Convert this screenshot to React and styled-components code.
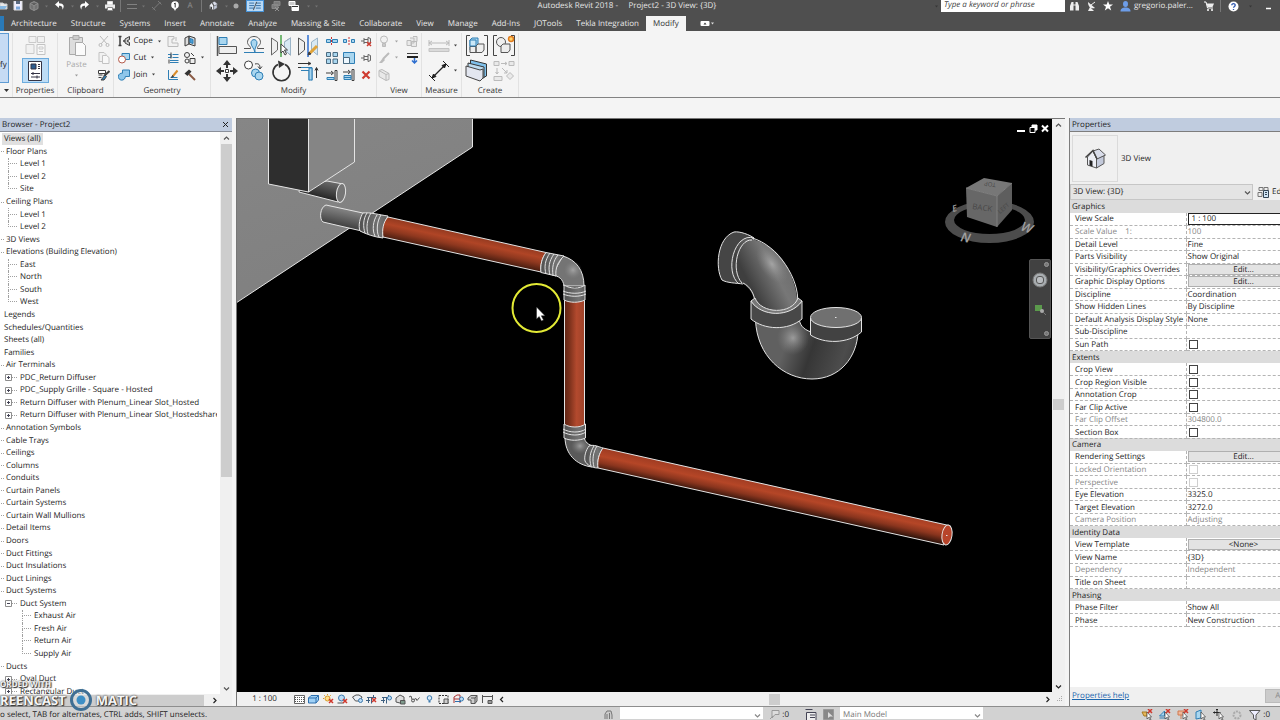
import React from "react";
import styled, { createGlobalStyle, css } from "styled-components";

const GlobalStyle = createGlobalStyle`
  * { box-sizing: border-box; }
  html, body, #root { height: 100%; }
  body {
    margin: 0;
    overflow: hidden;
    background: #f4f4f4;
    color: #1c1c1c;
    font-family: "Open Sans", "Noto Sans", sans-serif;
    font-size: 8px;
    line-height: 12px;
    text-rendering: geometricPrecision;
  }
  button, input, select { font: inherit; color: inherit; margin: 0; padding: 0; text-rendering: inherit; }
  button { border: 0; background: none; }
  svg { display: block; flex: none; }
`;

const Page = styled.div`
  position: relative;
  display: flex;
  flex-direction: column;
  height: 100vh;
  overflow: hidden;
  white-space: nowrap;
`;

/* ---------- title bar ---------- */

const TitleBar = styled.header`
  display: flex;
  flex: none;
  height: 16px;
  background: #4f4f4f;
  color: #e6e6e6;
  line-height: 12px;
`;

const QuickAccess = styled.div`
  display: flex;
  flex: 0 0 42%;
  height: 12px;
  overflow: hidden;
`;

const Slot = styled.button`
  display: flex;
  align-items: center;
  justify-content: center;
  flex: none;
  width: ${(p) => p.$w}px;
  height: 12px;
  overflow: hidden;
  opacity: ${(p) => (p.$dim ? 0.4 : 1)};
`;

const ActiveSlot = styled(Slot)`
  padding: 0 5px;
  svg { background: #b9d9f5; border: 1px solid #4793d8; }
`;

const Divider = styled.span`
  flex: none;
  width: 1px;
  height: 12px;
  margin: 0 3px;
  background: #777;
`;

const AppTitle = styled.h1`
  margin: 0;
  font-size: 8px;
  font-weight: 400;
  line-height: 12px;
  white-space: pre;
`;

const AccountBar = styled.div`
  display: flex;
  height: 12px;
  margin-left: auto;
`;

const Search = styled.input`
  width: 124px;
  height: 12px;
  margin-right: 1px;
  padding: 0 3px 2px;
  border: 0;
  background: #fff;
  color: #333;
  font-style: italic;
  &::placeholder { color: #444; opacity: 1; }
`;

const UserName = styled.button`
  width: 68px;
  text-align: left;
`;

/* ---------- ribbon ---------- */

const Tabs = styled.nav`
  display: flex;
  align-items: flex-start;
  flex: none;
  height: 15px;
  background: #4f4f4f;
`;

const FileTab = styled.button`
  width: 4px;
  height: 15px;
  background: #2a7ab8;
`;

const Tab = styled.button`
  height: 15px;
  padding: 0 7px;
  color: ${(p) => (p.$active ? "#333" : "#e8e8e8")};
  background: ${(p) => (p.$active ? "#f4f4f4" : "none")};
`;

const TabMenu = styled.button`
  display: flex;
  align-items: center;
  height: 15px;
  margin-left: 14px;
`;

const Ribbon = styled.section`
  display: flex;
  flex: none;
  height: 67px;
  padding-top: 2px;
  border-bottom: 1px solid #828282;
  background: #f4f4f4;
`;

const Panel = styled.div`
  display: flex;
  flex-direction: column;
  flex: none;
  width: ${(p) => p.$w}px;
  border-right: 1px solid #e2e2e2;
`;

const PanelBody = styled.div`
  display: flex;
  justify-content: center;
  gap: ${(p) => p.$gap || 0}px;
  height: 50px;
`;

const PanelLabel = styled.div`
  height: 14px;
  color: #333;
  line-height: 16px;
  text-align: center;
`;

const BigGrid = styled.div`
  display: grid;
  grid-auto-flow: column;
  grid-template-rows: 25px 25px;
  grid-auto-columns: 27px;
`;

const CaretColumn = styled.div`
  display: grid;
  grid-template-rows: 25px 25px;
  align-items: center;
`;

const SmallGrid = styled.div`
  display: grid;
  grid-auto-flow: column;
  grid-template-rows: repeat(3, 1fr);
  grid-auto-columns: ${(p) => p.$col || 17}px;
  height: 50px;
`;

const Tool = styled.button`
  display: flex;
  align-items: center;
  justify-content: ${(p) => (p.$start ? "flex-start" : "center")};
  gap: 4px;
  opacity: ${(p) => (p.$dim ? 0.45 : 1)};
`;

const PressedTool = styled(Tool)`
  border: 1px solid #6cabdd;
  background: #bcdcf6;
`;

const SelectTool = styled.button`
  width: 9px;
  height: 50px;
  padding-top: 14px;
  border: 1px solid #5e9bd3;
  border-left: 0;
  background: #c6dbf4;
  text-align: left;
  margin-right: auto;
`;

const PasteTool = styled.button`
  display: flex;
  flex-direction: column;
  align-items: center;
  gap: 3px;
  padding-top: 2px;
  width: 36px;
  color: #a8a8a8;
`;

const OptionsBar = styled.div`
  flex: none;
  height: 20px;
  background: #f4f4f4;
`;

/* ---------- work area ---------- */

const Workspace = styled.main`
  display: flex;
  flex: 1;
  gap: 4px;
  min-height: 0;
`;

const DockTitle = styled.h2`
  display: flex;
  justify-content: space-between;
  flex: none;
  height: 13px;
  margin: 0;
  padding: 0 3px 0 2px;
  background: #c0ccdf;
  font-size: 8px;
  font-weight: 400;
  line-height: 14px;
  button { display: flex; align-items: center; height: 12px; }
`;

const Browser = styled.aside`
  display: flex;
  flex-direction: column;
  flex: 0 0 232px;
  min-width: 0;
  min-height: 0;
`;

const TreeArea = styled.div`
  display: flex;
  flex: 1;
  min-height: 0;
  border-top: 1px solid #8a8f9a;
  background: #fff;
`;

const TreeClip = styled.div`
  flex: 1;
  min-width: 0;
  margin-right: 3px;
  padding-top: 1px;
  overflow: hidden;
`;

const Tree = styled.ul`
  display: grid;
  grid-auto-rows: 1fr;
  height: calc(100% + 4px);
  margin: 0;
  padding: 0;
  list-style: none;
`;

const TreeRow = styled.li`
  display: flex;
  align-items: center;
  min-height: 0;
  padding-left: ${(p) => p.$indent}px;
`;

const Root = styled.span`
  padding: 0 2px;
  ${(p) => p.$selected && css`background: #e0e0e0;`}
`;

const Dash = styled.i`
  width: ${(p) => p.$w}px;
  margin-right: ${(p) => p.$gap}px;
  border-top: 1px dotted #a0a0a0;
`;

const Branch = styled.i`
  display: grid;
  grid-template-rows: 1fr 1fr;
  align-self: stretch;
  width: 9px;
  margin-right: 3px;
  &::before {
    content: "";
    border-left: 1px dotted #a0a0a0;
    border-bottom: 1px dotted #a0a0a0;
  }
  &::after {
    content: "";
    border-left: ${(p) => (p.$last ? 0 : 1)}px dotted #a0a0a0;
  }
`;

const Expander = styled.button`
  display: flex;
  width: 7px;
  height: 7px;
`;

const VScroll = styled.div`
  display: flex;
  flex-direction: column;
  align-items: center;
  justify-content: space-between;
  flex: none;
  width: ${(p) => p.$w}px;
  background: #f0f0f0;
`;

const ScrollButton = styled.button`
  display: flex;
  align-items: center;
  justify-content: center;
  flex: none;
  width: 12px;
  height: 12px;
`;

const Track = styled.div`
  display: flex;
  flex-direction: ${(p) => (p.$horizontal ? "row" : "column")};
  align-items: center;
  flex: 1;
  align-self: stretch;
`;

const Space = styled.span`
  flex: ${(p) => p.$grow};
`;

const Thumb = styled.span`
  flex: ${(p) => p.$grow || "0 0 11px"};
  ${(p) => (p.$horizontal ? "height: 11px;" : "width: 11px;")}
  background: #cdcdcd;
`;

const HScroll = styled.div`
  display: flex;
  flex: none;
  align-items: center;
  height: 12px;
  background: #f0f0f0;
`;

/* ---------- 3D view ---------- */

const ViewWindow = styled.section`
  display: flex;
  flex-direction: column;
  flex: 1;
  min-width: 0;
  border-left: 1px solid #777;
`;

const ViewRow = styled.div`
  display: flex;
  flex: 1;
  min-height: 0;
  border-top: 1px solid #777;
`;

const Canvas = styled.div`
  position: relative;
  flex: 1;
  min-width: 0;
  overflow: hidden;
  background: #000;
  > svg { width: 100%; height: 100%; }
`;

const WindowButtons = styled.div`
  position: absolute;
  top: 4px;
  right: 2px;
  display: flex;
  gap: 3px;
  button { width: 9px; height: 10px; display: flex; align-items: center; }
`;

const NavBar = styled.div`
  position: absolute;
  top: 140px;
  right: 1px;
  display: flex;
  flex-direction: column;
  align-items: center;
  width: 22px;
  height: 80px;
  padding: 2px 0;
  border: 1px solid #555;
  border-radius: 2px;
  background: #414141;
  button { display: flex; }
  button:nth-child(1), button:nth-child(4) { align-self: flex-end; margin-right: 1px; }
  button:nth-child(2) { margin: 5px 0 15px; }
  button:nth-child(4) { margin-top: auto; }
`;

const ControlBar = styled.div`
  display: flex;
  align-items: center;
  flex: none;
  height: 14px;
  background: #f0f0f0;
`;

const ScaleButton = styled.button`
  width: 55px;
  text-align: center;
`;

const ControlIcons = styled.div`
  display: grid;
  grid-template-columns: repeat(15, 1fr);
  width: 217px;
  button { display: flex; align-items: center; justify-content: center; }
`;

/* ---------- properties ---------- */

const Properties = styled.aside`
  display: flex;
  flex: 0 0 211px;
  overflow: hidden;
  border-left: 1px solid #7d7d7d;
`;

const PropertiesInner = styled.div`
  display: flex;
  flex-direction: column;
  flex: 0 0 230px;
  background: #f0f0f0;
`;

const TypeCard = styled.div`
  display: flex;
  align-items: center;
  gap: 3px;
  height: 52px;
  padding: 2px 2px 0;
  border-top: 1px solid #7d7d7d;
`;

const TypeThumb = styled.div`
  display: flex;
  align-items: center;
  justify-content: center;
  width: 46px;
  height: 47px;
  border: 1px solid #dadada;
`;

const TypeRow = styled.div`
  display: flex;
  align-items: center;
  height: 17px;
  gap: 4px;
`;

const SelectBox = styled.span`
  position: relative;
  display: block;
  flex: 0 0 ${(p) => p.$w}px;
  select {
    width: 100%;
    height: ${(p) => p.$h}px;
    padding: 0 2px;
    appearance: none;
    border: 1px solid ${(p) => (p.$light ? "#fff" : "#c6c6c6")};
    border-radius: 0;
    background: ${(p) => (p.$light ? "#fff" : "#e4e4e4")};
    color: ${(p) => (p.$light ? "#777" : "#1c1c1c")};
  }
  svg { position: absolute; right: 2px; top: 50%; margin-top: -3px; pointer-events: none; }
`;

const EditType = styled.button`
  display: flex;
  align-items: center;
  gap: 3px;
`;

const Grid = styled.table`
  width: 100%;
  height: 427px;
  border-collapse: collapse;
  table-layout: fixed;
  background: #fff;
  line-height: 11px;
  th, td { padding: 0; text-align: left; font-weight: 400; height: 12px; }
`;

const NameColumn = styled.col`
  width: 116px;
`;

const GroupRow = styled.tr`
  background: #dcdcdc;
  th { padding-left: 2px; }
`;

const PropRow = styled.tr`
  color: ${(p) => (p.$dim ? "#868686" : "#1c1c1c")};
  th {
    padding-left: 5px;
    border-right: 1px dashed #b4b4b4;
    border-bottom: 1px dashed #b4b4b4;
    white-space: pre;
  }
  td {
    padding-left: 1px;
    border-bottom: 1px dashed #b4b4b4;
  }
`;

const CellInput = styled.input`
  display: block;
  width: 100%;
  height: 12px;
  padding: 0 3px;
  border: 1px solid #222;
  background: #fff;
`;

const CellButton = styled.button`
  display: block;
  width: 112px;
  height: 11px;
  border: 1px solid #b0b0b0;
  background: #e3e3e3;
  line-height: 9px;
`;

const Check = styled.input`
  display: block;
  appearance: none;
  width: 9px;
  height: 9px;
  margin-left: 1px;
  border: 1px solid ${(p) => (p.disabled ? "#cfcfcf" : "#444")};
  background: #fff;
`;

const GridRest = styled.div`
  flex: 1;
  background: #fff;
`;

const HelpRow = styled.div`
  display: flex;
  align-items: center;
  justify-content: space-between;
  height: 19px;
  padding: 0 0 1px 2px;
  a { color: #1c66ae; }
`;

const ApplyButton = styled.button`
  width: 41px;
  height: 14px;
  border: 1px solid #bbb;
  background: #cbcbcb;
  color: #8a8a8a;
`;

/* ---------- status bar ---------- */

const StatusBar = styled.footer`
  display: flex;
  flex: none;
  align-items: center;
  height: 14px;
  padding-top: 2px;
  border-top: 1px solid #8e8e8e;
  background: #d2d2d2;
  line-height: 14px;
  overflow: hidden;
`;

const StatusText = styled.span`
  flex: 1;
  min-width: 0;
`;

const StatusGroup = styled.div`
  display: flex;
  align-items: center;
  flex: none;
  gap: 6px;
`;

const StatusRight = styled(StatusGroup)`
  flex: 0 0 297px;
  justify-content: flex-end;
  padding-right: 10px;
`;

const Count = styled.span`
  margin-left: -4px;
  margin-right: ${(p) => p.$after || 0}px;
`;

const Watermark = styled.div`
  position: absolute;
  left: 0;
  bottom: 8px;
  color: #f6f6f6;
  font-weight: 700;
  text-shadow: 0 0 2px #222, 1px 1px 1px #333;
  pointer-events: none;
`;

const MarkTop = styled.div`
  height: 10px;
  line-height: 12px;
`;

const MarkLine = styled.div`
  display: flex;
  align-items: center;
  gap: 3px;
  height: 24px;
  margin-top: -1px;
  font-size: 13px;
`;

/* ---------- icons ---------- */

const K = "#3f3f3f";
const B = "#2f7fb5";
const L = "#a9d6ef";

const Svg = ({ s = 12, w, h, children }) => (
  <svg width={w || s} height={h || s} viewBox={`0 0 ${w || s} ${h || s}`} fill="none" stroke={K} strokeWidth="1" aria-hidden="true">
    {children}
  </svg>
);

const Caret = ({ c = K }) => (
  <Svg w={5} h={3}><path d="M1 0.5h3L2.5 2.5z" fill={c} stroke="none" /></Svg>
);

const Chevron = ({ d = "down", c = "#555", s = 7 }) => {
  const paths = { down: "M1 2.5l2.5 2.5L6 2.5", up: "M1 4.5L3.5 2 6 4.5", right: "M2.5 1L5 3.5 2.5 6", left: "M5 1L2.5 3.5 5 6" };
  return <Svg s={s}><path d={paths[d]} stroke={c} strokeWidth="1.2" /></Svg>;
};

const Save = () => <Svg s={10}><path d="M1 0h8v9H1z" fill="#eef" stroke="#ddd" /><path d="M3 0h4v3H3z" fill="#5a6a80" stroke="none" /><path d="M3 5.5h4v3H3z" fill="#7aa5d8" stroke="none" /></Svg>;
const Folder = () => <Svg w={8} h={10}><path d="M0 2h3l1 1h3v5H0z" fill="#e8e8e8" stroke="#ccc" /><path d="M0 5h7l-2 3H0z" fill="#86b7e0" stroke="none" /></Svg>;
const CubeGrey = () => <Svg s={10}><path d="M5 0.500L9 2.500v5L5 9.500 1 7.500v-5zM5 4.500v5M1 2.500l4 2 4-2" stroke="#eee" fill="#aaa" /></Svg>;
const Undo = () => <Svg s={10}><path d="M4 0L0 3.500 4 7V4.800c3 0 3.500 1 3.500 4C9.800 5.500 9 2.300 4 2.300z" fill="#fff" stroke="none" /></Svg>;
const Redo = () => <Svg s={10}><path d="M6 0l4 3.500L6 7V4.800c-3 0-3.500 1-3.500 4C0.200 5.500 1 2.300 6 2.300z" fill="#fff" stroke="none" /></Svg>;
const Print = () => <Svg s={10}><path d="M2.500 0.500h5v3h-5z" fill="#fff" stroke="#ddd" /><path d="M0 3.500h10v4H0z" fill="#e9e9e9" stroke="none" /><path d="M2.500 6.500h5v3h-5z" fill="#fff" stroke="#888" /></Svg>;
const Ruler = () => <Svg s={10}><path d="M0 3.500h10M0 7.500h10" stroke="#ccc" /></Svg>;
const AlignedDim = () => <Svg s={10}><path d="M1 8.500L8.500 1M6 0l3.500 3.500M0 6l3.500 3.500" stroke="#bbb" /></Svg>;
const TagOne = () => <Svg s={10}><circle cx="5" cy="4" r="3.800" fill="#fff" stroke="none" /><path d="M3.500 7h3L5 10z" fill="#fff" stroke="none" /><path d="M4 3l1.200-1v4.500" stroke="#333" /></Svg>;
const House3D = ({ s = 10 }) => (
  <svg width={s} height={s} viewBox="0 0 22 22" fill="none" stroke="#47536a" strokeWidth="1" aria-hidden="true">
    <path d="M3.500 9L9 3l3.500 7.500V20L3.500 17z" fill="#eceef4" stroke="#555" />
    <path d="M12.500 10.500l7.500-3v8L12.500 20z" fill="#c3c9da" stroke="#555" />
    <path d="M9 3l6-2 6.500 6-8.500 4z" fill="#d9ddea" stroke="#555" />
    <path d="M1.500 9.500L9 2.500l4 8.500" stroke="#444" strokeWidth="1.500" />
    <path d="M5.500 12l3 1v5.500l-3-1z" fill="#222" stroke="none" />
  </svg>
);
const Section = () => <Svg s={8}><circle cx="4" cy="4" r="2.500" fill="#aaa" stroke="none" /></Svg>;
const ThinLines = () => <Svg w={18} h={12}><path d="M2 2.500h6M2 5.500h6M2 8.500h6M10 2.500h6M10 5.500h6M10 8.500h6" stroke="#1f5f98" /><path d="M11 1L7 11" stroke={K} /></Svg>;
const CloseHidden = () => <Svg s={10}><path d="M3 0.500h6v4H3zM1 3.500h6v4H1z" fill="#bbb" stroke="#ddd" /><path d="M4 6l4 4M8 6l-4 4" stroke="#fff" /></Svg>;
const SwitchWin = () => <Svg s={11}><path d="M1 0.500h6v4H1z" fill="#ccc" stroke="#fff" /><path d="M4 4.500h6.500v5H4z" fill="#fff" stroke="#fff" /><path d="M4 5.500h6" stroke="#333" /></Svg>;
const Binoculars = () => <Svg s={11}><path d="M1 9.500V5l1.500-4h2v8.500zM6.500 9.500V1h2L10 5v4.500z" fill="#eee" stroke="none" /><path d="M4 4h3" stroke="#eee" /></Svg>;
const Dish = () => <Svg s={11}><path d="M2 1c0 5 3 7 7 6zM4 6l-2 4h6z" fill="#eee" stroke="none" /><path d="M5 4l4-3" stroke="#eee" /></Svg>;
const Star = () => <Svg s={10}><path d="M5 0l1.300 3.600H10L7 5.800 8.200 9.500 5 7.300 1.800 9.500 3 5.800 0 3.600h3.700z" fill="#fff" stroke="none" /></Svg>;
const Person = () => <Svg s={11}><ellipse cx="5.500" cy="3" rx="2.500" ry="3" fill="#6d9de8" stroke="none" /><path d="M0.500 10.500c0-3 2-4 5-4s5 1 5 4z" fill="#6d9de8" stroke="none" /></Svg>;
const Cart = () => <Svg s={11}><path d="M0 1h2l1.500 6H9" stroke="#fff" /><path d="M2.500 2.500H10L8.500 6h-5z" fill="#eee" stroke="none" /><circle cx="4" cy="9" r="1" fill="#fff" stroke="none" /><circle cx="8" cy="9" r="1" fill="#fff" stroke="none" /></Svg>;
const Help = () => <Svg s={11}><circle cx="5.500" cy="5.500" r="5" fill="#fff" stroke="none" /><path d="M3.800 4.200c0-2 3.400-2 3.400 0 0 1.300-1.700 1.300-1.700 2.600M5.500 8v1" stroke="#2f58b0" strokeWidth="1.300" /></Svg>;

const TypeProps = () => <Svg s={22}><path d="M5 1.500h7v6H5zM13.500 1.500h7v6h-7zM2 9.500h8v9H2z" stroke="#999" fill="#eee" /><path d="M13 9.500h8v10h-8z" stroke="#888" fill="#fff" /><path d="M15 12h4v2h-4zM15 16.500h4" stroke="#999" /></Svg>;
const PropsSheet = () => <Svg w={16} h={20}><path d="M1.500 0.500h13v19h-13z" fill="#fff" stroke="#334" /><path d="M4 3h5v5H4z" fill="#2c5d8f" stroke="#334" /><path d="M11 3.500h2M11 5.500h2M11 7.500h2M4 12.500h9M4 16h9M6 11v3M10 14.500v3" stroke="#334" /></Svg>;
const Paste = () => <Svg w={18} h={21}><path d="M1.500 2.500h13v17h-13z" fill="#ddd" stroke="#aaa" /><path d="M5 0.500h6v4H5z" fill="#ccc" stroke="#aaa" /><path d="M7.500 7.500h7l3 3v10h-10z" fill="#fbfbfb" stroke="#aaa" /></Svg>;
const Scissors = () => <Svg s={12}><path d="M2 1l7 8M10 1L3 9" stroke="#777" /><circle cx="2.500" cy="10" r="1.500" stroke="#777" /><circle cx="9.500" cy="10" r="1.500" stroke="#777" /></Svg>;
const Copy2 = () => <Svg s={12}><path d="M1 0.500h5l2 2v7H1z" fill="#eee" stroke="#888" /><path d="M4.500 3.500h4l2.500 2v6H4.500z" fill="#fff" stroke="#888" /></Svg>;
const MatchType = () => <Svg s={12}><path d="M0.500 1.500h7v3h-7zM0.500 6h4M0.500 8.500h3" fill="#fff" /><path d="M11.500 2L6 7" strokeWidth="2" /><path d="M7 6l1.500 1.500L6 11H3z" fill={B} stroke={K} /></Svg>;

const Cope = () => <Svg s={12}><path d="M0.500 1.500h3M0.500 10.500h3M2 1.500v9M5 6h2.500" strokeWidth="1.500" /><path d="M11.500 1.500L7 4v4l4.500 2.500V7.500L9 6l2.500-1.500z" fill="#ccc" /></Svg>;
const CutGeo = () => <Svg s={12}><path d="M4 1.500h7.500v6H4z" fill={L} stroke={B} /><circle cx="4" cy="7.500" r="3.500" fill="#fff" stroke="#b45a4a" /></Svg>;
const JoinGeo = () => <Svg s={12}><path d="M4.500 1h7v6.500H7.300A3.500 3.500 0 1 1 4.500 4.200z" fill="#8ec6ea" stroke={B} /></Svg>;
const Notch = () => <Svg s={12}><path d="M1 1.500h6V4H5v4h6v3.500H1z" fill="#eee" stroke="#777" /><path d="M9 2v4" stroke="#777" /></Svg>;
const SplitFace = () => <Svg s={12}><path d="M1 3l4-2v8l-4 2zM5 1l6 2v8L5 9z" fill="#ddd" stroke={K} /><path d="M6 3.500l3 1v4l-3-1z" fill="#4a9fd8" stroke={B} /></Svg>;
const WallJoin = () => <Svg s={12}><path d="M1 2.500h3v3H1M5.500 2.500h6M5.500 5.500h6M3 8.500h8.500M3 10.500h8.500" stroke={B} /><path d="M4 0.500v6M2 7.500v4" stroke={K} /></Svg>;
const Unjoin = () => <Svg s={12}><circle cx="3" cy="3" r="2.500" /><path d="M6 6.500h5v5H6z" fill="#eee" /><circle cx="3" cy="9" r="2" /><path d="M7 1l3 3" /></Svg>;
const PaintEdit = () => <Svg s={12}><path d="M1.500 1v9.500H11M3.500 8.500h7" stroke={B} /><path d="M10.500 1.500L6 7" stroke="#d98c2b" strokeWidth="2" /><path d="M4.500 8.500l1-2 1 1z" fill={K} /></Svg>;
const Hammer = () => <Svg s={12}><path d="M5 5l6 6" stroke="#8a5a44" strokeWidth="2" /><path d="M0.500 4.500L5 0.500l2.500 2L3.500 7z" fill="#333" stroke="none" /></Svg>;

const Align = () => <Svg s={22}><path d="M1.500 1v20" stroke="#555" strokeWidth="1.500" /><path d="M3 2.500h8v7H3z" fill={L} stroke={B} /><path d="M3 11.500h17.500v7H3z" fill="#eee" stroke="#555" /></Svg>;
const Offset = () => <Svg s={22}><path d="M1 13.500h6.500C8.500 12 4.500 10 4.500 7.500c0-8 13-8 13 0 0 2.500-4 4.500-3 6H21" stroke="#555" /><path d="M1 17.500h11C11 13 8 11 8 8c0-4.500 6-4.500 6 0 0 3-3 5-2 9.500h9" fill={L} stroke={B} /></Svg>;
const MirrorPick = () => <Svg s={22}><path d="M1.500 3l6 4v8l-6 5zM20.500 3l-6 4v8l6 5z" fill="#eee" stroke="#666" /><path d="M20.500 3l-6 4v8l6 5z" fill="#d8e9f4" stroke="#9ab4c8" /><path d="M11 0v22" stroke="#4ca64c" strokeWidth="1.500" /><path d="M11 9v9l2-2 2 4 1.500-1-2-4h3z" fill="#fff" stroke={K} /></Svg>;
const MirrorDraw = () => <Svg s={22}><path d="M1.500 3l6 4v8l-6 5z" fill="#eee" stroke="#555" /><path d="M20.500 3l-6 4v8l6 5z" fill="#d8e9f4" stroke="#9ab4c8" /><path d="M11 0v22" stroke="#2f6fd0" strokeWidth="1.500" /><path d="M20 11l-7 7" stroke="#e0a33a" strokeWidth="3" /><path d="M11 20l1-3 2 2z" fill={K} /></Svg>;
const Move = () => <Svg s={22}><path d="M11 0l4 5h-3v3h-2V5H7zM11 22l4-5h-3v-3h-2v3H7zM0 11l5-4v3h3v2H5v3zM22 11l-5-4v3h-3v2h3v3z" fill="#333" stroke="none" /><path d="M9.500 9.500h3v3h-3z" fill="#fff" /></Svg>;
const CopyTool = () => <Svg s={22}><circle cx="5.500" cy="5" r="4" fill="#fff" stroke={K} /><circle cx="12.500" cy="13" r="4" fill={L} stroke={B} /><circle cx="16" cy="16" r="4" fill={L} stroke={B} /><path d="M12 4c4-1 5 1 5 4M15 6.500l2 2.500 2-2.500" stroke={K} /></Svg>;
const Rotate = () => <Svg s={22}><path d="M15 4.500a8.500 8.500 0 1 1-7 0" strokeWidth="1.600" stroke="#333" /><path d="M8 0.500l7 3.500-6 4z" fill="#333" stroke="none" /></Svg>;
const Trim = () => <Svg s={22}><path d="M1 7.500h10M1 3.500h12M11 2l3 1.500L11 5" stroke="#333" /><path d="M4 7.500h11v13M4 10.500h8v10" stroke={B} fill="none" /><path d="M12 8h3v12h-3z" fill={L} stroke={B} /><path d="M19.500 18V8M18 10.500l1.500-3 1.500 3" stroke="#333" /></Svg>;
const Split = () => <Svg s={12}><path d="M0.500 4.500h4v3h-4zM6.500 4.500h5v3h-5z" fill={L} stroke={B} /><path d="M5.500 2v8" stroke="#c33" strokeDasharray="2 1" /></Svg>;
const SplitGap = () => <Svg s={12}><path d="M0.500 4.500h3v3h-3zM8.500 4.500h3v3h-3z" fill={L} stroke={B} /><path d="M6 2v8" stroke="#c33" strokeDasharray="2 1" /></Svg>;
const Pin = ({ x }) => <Svg s={12}><path d="M1 6h3M4 3v6M4 4.500h4M4 7.500h4M8 2.500v7l2.500-1V3.500z" stroke="#666" fill="#eee" />{x && <path d="M7 7l4 4M11 7l-4 4" stroke="#d03a30" strokeWidth="1.500" />}</Svg>;
const ArrayTool = () => <Svg s={12}><path d="M0.500 0.500h4v4h-4zM7 0.500h4.500v4H7zM0.500 7h4v4.500h-4zM7 7h4.500v4.500H7z" fill={L} stroke="#4a6a80" /></Svg>;
const Scale = () => <Svg s={12}><path d="M0.500 0.500h11v11h-11z" fill={L} stroke={B} /><path d="M0.500 5.500h6v6h-6z" fill="#eef8ff" stroke="#4a6a80" /></Svg>;
const TrimOne = () => <Svg s={12}><path d="M0 4h7M5 2l2.500 2L5 6M9 1.500h2v10H9z" /><path d="M1 8.500h7v2H1z" fill={L} stroke={B} /></Svg>;
const TrimMany = () => <Svg s={12}><path d="M0 3h7M5 1l2.500 2L5 5M9 0.500h2v11H9z" /><path d="M1 6.500h7v4H1zM1 8.500h7" fill={L} stroke={B} /></Svg>;
const Delete = () => <Svg s={10}><path d="M1.500 1.500l7 7M8.500 1.500l-7 7" stroke="#cf3b30" strokeWidth="2.200" /></Svg>;
const Bulb = () => <Svg s={12}><circle cx="6" cy="4.500" r="3.500" fill="#eee" stroke="#777" /><path d="M4.500 8.500h3v3h-3z" fill="#999" stroke="#777" /></Svg>;
const Brush = () => <Svg s={12}><path d="M11 1L5 7" stroke="#777" strokeWidth="2" /><path d="M5 6l2 2-3 3H1z" fill="#777" stroke="none" /></Svg>;
const Blocks = () => <Svg s={12}><path d="M1 5.500h4v5H1zM4 3h4v5H5M7 1.500h4v5H8M5.500 6.500h5v5h-5z" fill="#ddd" stroke="#777" /></Svg>;
const LineWork = () => <Svg s={12}><path d="M1 1.500h11" /><path d="M1 5h11" stroke="#222" strokeWidth="2" /><path d="M8.500 6v5M6 8.500L8.500 11 11 8.500" stroke="#2f6fd0" strokeWidth="1.500" /></Svg>;
const Box3 = () => <Svg s={12}><path d="M1 1.500l3-1 7 4v6l-3 1-7-4zM1 1.500l7 4v6M8 5.500l3-1" fill="#ddd" stroke="#777" /></Svg>;
const MeasureTool = () => <Svg w={22} h={14}><path d="M1 4h20M1 1v6M21 1v6M4 2L1 4l3 2M18 2l3 2-3 2" stroke="#777" /><path d="M1 9.500h20v3H1z" fill="#bbb" stroke="#888" /></Svg>;
const DimTool = () => <Svg s={22}><path d="M4 18L18 4" stroke="#222" strokeWidth="1.300" /><path d="M1 15l6 6M15 1l6 6" stroke="#222" /><path d="M4 18l1.500-4 2.500 2.500zM18 4l-1.500 4L14 5.500z" fill="#222" stroke="#222" /></Svg>;
const Bracket = () => <path d="M4 0.500H0.500v20H4M18 0.500h3.500v20H18" stroke="#444" />;
const Assembly = () => <Svg s={22}><Bracket /><path d="M4 5l2-2h6v12H4z" fill={L} stroke={B} /><path d="M4 11.500h6v6H4zM10 11l2-2h6v6l-2 2.500h-6z" fill="#eee" stroke="#555" /><path d="M4 5h6v6H4z" fill="#cbe8f8" stroke={B} /></Svg>;
const GroupTool = () => <Svg s={22}><Bracket /><circle cx="8" cy="7" r="4.500" fill="#eee" stroke="#555" /><path d="M8 11l2-2h7v6l-2 2.500H8z" fill="#ececec" stroke="#555" /><circle cx="18" cy="4" r="2.500" fill="#ffd36b" stroke="#e07b1f" strokeWidth="1.500" /></Svg>;
const Parts = () => <Svg s={23}><path d="M5.500 1l16 4v12l-2 1-14-6z" fill="#7fc0ea" stroke="#333" /><path d="M3 4l16 4v11l-16-5z" fill="#bddcf0" stroke="#333" /><path d="M1 7l14 4 3-1v9l-3 3-14-5z" fill="#e2e6f0" stroke="#444" /></Svg>;
const Similar = () => <Svg s={22}><path d="M1 1.500h5v4H1zM16 1.500h5v4h-5zM8 3.500h6M12 2l2 1.500L12 5M1 16.500h8v4H1zM4 8v6M2.500 12L4 14l1.500-2M9 8l5 5M14 10v3h-3M17 12.500l3.500 3.500-3.500 3.500-3.500-3.500z" fill="#ddd" stroke="#777" /></Svg>;

/* view control bar and status bar glyphs */
const X = ({ x = 6, y = 5 }) => <path d={`M${x} ${y}l4 4M${x + 4} ${y}l-4 4`} stroke="#d0382c" strokeWidth="1.500" />;
const DetailIc = () => <Svg s={11}><path d="M0.500 1.500h10v8h-10z" stroke="#666" fill="#fff" /><path d="M1 3.500h9M1 5.500h9M1 7.500h9" stroke="#555" strokeDasharray="1 1" /></Svg>;
const ShadeIc = () => <Svg s={11}><path d="M0.500 4l2.500-2.500h7.500v4.500L8 9H0.500z" fill="#9fd0f5" stroke="#2c6fae" /><path d="M0.500 4H8v5M8 4l2.500-2.500" stroke="#2c6fae" /></Svg>;
const SunIc = () => <Svg s={11}><circle cx="4.500" cy="4.500" r="2.500" fill="#ffe08a" stroke="#d89a28" /><path d="M4.500 0v1M0 4.500h1M1.200 1.200l1 1M7.800 1.200l-1 1" stroke="#d89a28" /><X /></Svg>;
const ShadowIc = () => <Svg s={11}><circle cx="4.500" cy="4" r="3" fill="#bddcf5" stroke="#3b79ae" /><path d="M0.500 9h6" stroke="#555" /><X /></Svg>;
const RenderIc = () => <Svg s={11}><path d="M0.500 3l3 4h4.500l2-4-3-2H4z" fill="#e8eef5" stroke="#555" /><circle cx="8.500" cy="6.500" r="2" fill="#bddcf5" stroke="#3b79ae" /></Svg>;
const CropIc = ({ x }) => <Svg s={11}><path d="M0 6.500h4M2.500 9V3.500h5V1M5.500 3.500v6M1 3.500h9" stroke="#3d5f80" />{x ? <X y={4} /> : <circle cx="8.500" cy="4" r="2" fill="#bddcf5" stroke="#3b79ae" />}</Svg>;
const LockIc = () => <Svg s={11}><path d="M1 4l4-3 4 2v3l-4 3-4-1z" fill="#ddd" stroke="#555" /><path d="M5.500 6.500h4.500v3.500H5.500z" fill="#7d9a8b" stroke="#555" /></Svg>;
const GlassIc = () => <Svg s={11}><path d="M0 3l2-1 1 3.500h2l2-1 1 2 2.500-3" stroke="#555" /><circle cx="4" cy="6.500" r="1.500" fill="#ddd" stroke="#555" /></Svg>;
const RevealIc = () => <Svg s={11}><circle cx="5.500" cy="4" r="2.300" fill="#d8ecfa" stroke="#3b79ae" /><path d="M4.500 7.500h2" stroke="#3b79ae" strokeWidth="2" /></Svg>;
const TempIc = () => <Svg s={11}><path d="M1 1.500h9v8H1z" strokeDasharray="2 1" stroke="#333" /><path d="M6 5h4v4.500H6z" fill="#ccc" stroke="#555" /></Svg>;
const AnalyticIc = () => <Svg s={11}><path d="M1 9V3l3-2h3v8M1 5h6" stroke="#a33" /><circle cx="8.500" cy="5" r="2" fill="#bddcf5" stroke="#3b79ae" /><path d="M2 7.500h6" stroke="#2c6fae" /></Svg>;
const HighlightIc = () => <Svg s={11}><path d="M1 4l3-2.500h6V7L8 9.500H4V6H1z" fill="#ccc" stroke="#555" /><path d="M4 4h4v5.500M8 4l2-2.500" stroke="#555" /></Svg>;
const ConstraintIc = () => <Svg s={11}><path d="M0.500 1v8M10.500 1v5M0.500 2.500h10" stroke="#555" /><path d="M6 6.500h4v3H6z" fill="#999" stroke="#555" /></Svg>;
const Workset = () => <Svg s={11}><path d="M2 10V5l2-3h4l1 4v4M4 5v5M6.500 4v6" stroke="#777" fill="#ccc" /></Svg>;
const Bubble = () => <Svg s={11}><path d="M3 1.500h7v4H6L3 9z" fill="#ddd" stroke="#999" /><path d="M1 10l3-3" stroke="#999" /></Svg>;
const ListIc = () => <Svg s={12}><path d="M0.500 0.500h7M1.500 3.500h9.500v8H1.500z" fill="#eee" stroke="#445" /><path d="M5 6h5M5 8.500h5" stroke="#445" /></Svg>;
const OptIc = () => <Svg s={11}><path d="M0.500 0.500h10v10h-10z" fill="#888" stroke="#999" /><path d="M5 3v6l2-1.500h3z" fill="#ddd" stroke="none" /></Svg>;
const Arrow = () => <path d="M6 3v7l1.500-1.500L9 11l1-.5-1.500-2.500h2z" fill="#fff" stroke="#444" strokeWidth="0.700" />;
const LinkSel = () => <Svg s={12}><path d="M1 3h5v4H3z" fill="#e6b85a" stroke="#a87820" /><Arrow /><X x={7} y={0} /></Svg>;
const UnderSel = () => <Svg s={12}><path d="M0.500 7l5-5v5zM0.500 9h8" stroke={B} fill={L} /><Arrow /><X x={7} y={0} /></Svg>;
const PinSel = () => <Svg s={12}><path d="M1 2h6v4H1zM4 6v4" stroke="#d07a50" fill="#f0b79a" /><Arrow /><X x={7} y={0} /></Svg>;
const FaceSel = () => <Svg s={12}><path d="M1 3l5-2v8l-5 1z" stroke={B} fill={L} /><Arrow /></Svg>;
const DragSel = () => <Svg s={12}><path d="M4 0v7M0.500 3.500h7M3 1l1-1 1 1M1.500 2.500l-1 1 1 1" stroke="#222" /><Arrow /></Svg>;
const GearSel = () => <Svg s={12}><circle cx="6" cy="6" r="3.500" stroke="#aaa" strokeWidth="2" strokeDasharray="2 1" /></Svg>;
const Filter = () => <Svg s={12}><path d="M0.500 1.500h10.500L7 6v5L4.500 9.500V6z" fill="#eef" stroke="#555" /></Svg>;

/* ---------- data ---------- */

const tabNames = ["Architecture", "Structure", "Systems", "Insert", "Annotate", "Analyze", "Massing & Site", "Collaborate", "View", "Manage", "Add-Ins", "JOTools", "Tekla Integration", "Modify"];

const quickItems = [
  ["Open", 8, Folder], ["Save", 20, Save], ["Sync", 12, CubeGrey, true], ["Sync options", 13, Caret, true],
  ["Undo", 14, Undo], ["Undo list", 10, Caret, true], ["Redo", 14, Redo], ["Redo list", 12, Caret, true], ["Print", 14, Print], null,
  ["Measure", 16, Ruler, true], ["Measure options", 6, Caret, true], ["Aligned dimension", 22, AlignedDim, true], ["Tag", 14, TagOne], ["Text", 16, "A", true], null,
  ["Default 3D view", 16, House3D], ["3D options", 10, Caret, true], ["Section", 10, Section], ["Thin lines", 28, ThinLines],
  ["Close hidden", 14, CloseHidden, true], ["Switch windows", 20, SwitchWin], ["Switch options", 10, Caret, true], ["Customize", 6, Caret, true],
];

// [level, label, kind]: "last" closes a branch, "plus"/"minus" carry an expander
const treeItems = [
  [0, "Views (all)", "selected"],
  [1, "Floor Plans"], [2, "Level 1"], [2, "Level 2"], [2, "Site", "last"],
  [1, "Ceiling Plans"], [2, "Level 1"], [2, "Level 2", "last"],
  [1, "3D Views"], [1, "Elevations (Building Elevation)"],
  [2, "East"], [2, "North"], [2, "South"], [2, "West", "last"],
  [0, "Legends"], [0, "Schedules/Quantities"], [0, "Sheets (all)"], [0, "Families"],
  [1, "Air Terminals"],
  [2, "PDC_Return Diffuser", "plus"], [2, "PDC_Supply Grille - Square - Hosted", "plus"],
  [2, "Return Diffuser with Plenum_Linear Slot_Hosted", "plus"], [2, "Return Diffuser with Plenum_Linear Slot_Hostedshared", "plus"],
  [1, "Annotation Symbols"], [1, "Cable Trays"], [1, "Ceilings"], [1, "Columns"], [1, "Conduits"],
  [1, "Curtain Panels"], [1, "Curtain Systems"], [1, "Curtain Wall Mullions"], [1, "Detail Items"], [1, "Doors"],
  [1, "Duct Fittings"], [1, "Duct Insulations"], [1, "Duct Linings"], [1, "Duct Systems"],
  [2, "Duct System", "minus"],
  [3, "Exhaust Air"], [3, "Fresh Air"], [3, "Return Air"], [3, "Supply Air", "last"],
  [1, "Ducts"], [2, "Oval Duct", "plus"], [2, "Rectangular Duct", "plus"],
];

const propGroups = [
  ["Graphics", [
    ["View Scale", "input", "1 : 100"], ["Scale Value    1:", "text", "100", true], ["Detail Level", "text", "Fine"],
    ["Parts Visibility", "text", "Show Original"], ["Visibility/Graphics Overrides", "button", "Edit..."],
    ["Graphic Display Options", "button", "Edit..."], ["Discipline", "text", "Coordination"],
    ["Show Hidden Lines", "text", "By Discipline"], ["Default Analysis Display Style", "text", "None"],
    ["Sub-Discipline", "text", ""], ["Sun Path", "check"],
  ]],
  ["Extents", [
    ["Crop View", "check"], ["Crop Region Visible", "check"], ["Annotation Crop", "check"], ["Far Clip Active", "check"],
    ["Far Clip Offset", "text", "304800.0", true], ["Section Box", "check"],
  ]],
  ["Camera", [
    ["Rendering Settings", "button", "Edit..."], ["Locked Orientation", "check", "", true], ["Perspective", "check", "", true],
    ["Eye Elevation", "text", "3325.0"], ["Target Elevation", "text", "3272.0"], ["Camera Position", "text", "Adjusting", true],
  ]],
  ["Identity Data", [
    ["View Template", "button", "<None>"], ["View Name", "text", "{3D}"], ["Dependency", "text", "Independent", true], ["Title on Sheet", "text", ""],
  ]],
  ["Phasing", [["Phase Filter", "text", "Show All"], ["Phase", "text", "New Construction"]]],
];

const viewControls = [
  ["Detail level", <DetailIc />], ["Visual style", <ShadeIc />], ["Sun path", <SunIc />], ["Shadows", <ShadowIc />],
  ["Rendering", <RenderIc />], ["Crop view", <CropIc x />], ["Crop region", <CropIc />], ["Lock view", <LockIc />],
  ["Hide/isolate", <GlassIc />], ["Reveal hidden", <RevealIc />], ["Temporary properties", <TempIc />],
  ["Analytical model", <AnalyticIc />], ["Displacement", <HighlightIc />], ["Constraints", <ConstraintIc />],
  ["Less", <Chevron d="left" c="#222" />],
];

/* ---------- pieces ---------- */

function QuickItem({ item }) {
  if (!item) return <Divider />;
  const [label, w, Icon, dim] = item;
  const Box = label === "Thin lines" ? ActiveSlot : Slot;
  return (
    <Box $w={w} $dim={dim} aria-label={label}>
      {Icon === "A" ? "A" : Icon === Caret ? <Caret c="#aaa" /> : <Icon />}
    </Box>
  );
}

function TreeItem({ item }) {
  const [level, label, kind] = item;
  if (level === 0) {
    return <TreeRow $indent={2}><Root $selected={kind === "selected"}>{label}</Root></TreeRow>;
  }
  if (level === 1) {
    return <TreeRow $indent={1}><Dash $w={3} $gap={2} />{label}</TreeRow>;
  }
  if (kind === "plus" || kind === "minus") {
    return (
      <TreeRow $indent={5}>
        <Expander aria-label={kind === "plus" ? "Expand" : "Collapse"}>
          <Svg s={7}>
            <path d="M0.500 0.500h6v6h-6z" stroke="#8d8d8d" fill="#fff" />
            <path d={kind === "plus" ? "M2 3.500h3M3.500 2v3" : "M2 3.500h3"} stroke="#445" />
          </Svg>
        </Expander>
        <Dash $w={5} $gap={3} />{label}
      </TreeRow>
    );
  }
  return <TreeRow $indent={level === 2 ? 8 : 22}><Branch $last={kind === "last"} />{label}</TreeRow>;
}

function PropValue({ id, type, value, dim }) {
  if (type === "input") return <CellInput id={id} defaultValue={value} />;
  if (type === "button") return <CellButton id={id}>{value}</CellButton>;
  if (type === "check") return <Check id={id} type="checkbox" disabled={dim} />;
  return value;
}

function PropertyGrid() {
  return (
    <Grid>
      <colgroup><NameColumn /><col /></colgroup>
      <tbody>
        {propGroups.map(([group, rows]) => (
          <React.Fragment key={group}>
            <GroupRow><th colSpan={2}>{group}</th></GroupRow>
            {rows.map(([name, type, value, dim]) => {
              const id = name.replace(/\W+/g, "-").toLowerCase();
              return (
                <PropRow key={name} $dim={dim}>
                  <th>{type === "text" ? name : <label htmlFor={id}>{name}</label>}</th>
                  <td><PropValue id={id} type={type} value={value} dim={dim} /></td>
                </PropRow>
              );
            })}
          </React.Fragment>
        ))}
      </tbody>
    </Grid>
  );
}

function Scene() {
  return (
    <svg viewBox="237 119 815 573" preserveAspectRatio="xMinYMin meet" fill="none" stroke="#e4e4e4" strokeWidth="1" aria-label="3D model">
      <defs>
        <linearGradient id="wall" x1="236" y1="118" x2="300" y2="300" gradientUnits="userSpaceOnUse">
          <stop offset="0" stopColor="#868686" /><stop offset="1" stopColor="#808080" />
        </linearGradient>
        <linearGradient id="run1" x1="467" y1="233" x2="462" y2="256" gradientUnits="userSpaceOnUse">
          <stop offset="0" stopColor="#8c371e" /><stop offset="0.350" stopColor="#b04526" /><stop offset="0.600" stopColor="#8f381f" /><stop offset="1" stopColor="#3c180d" />
        </linearGradient>
        <linearGradient id="run3" x1="776" y1="486" x2="771.500" y2="507" gradientUnits="userSpaceOnUse">
          <stop offset="0" stopColor="#a03c22" /><stop offset="0.350" stopColor="#b54627" /><stop offset="0.650" stopColor="#8a351e" /><stop offset="1" stopColor="#33150c" />
        </linearGradient>
        <linearGradient id="run2" x1="564" y1="0" x2="585" y2="0" gradientUnits="userSpaceOnUse">
          <stop offset="0" stopColor="#5c2414" /><stop offset="0.250" stopColor="#7a301b" /><stop offset="0.600" stopColor="#b34a2e" /><stop offset="1" stopColor="#9c4128" />
        </linearGradient>
        <linearGradient id="stub" x1="346" y1="208" x2="342" y2="227" gradientUnits="userSpaceOnUse">
          <stop offset="0" stopColor="#8a8a8a" /><stop offset="0.400" stopColor="#6c6c6c" /><stop offset="1" stopColor="#3e3e3e" />
        </linearGradient>
        <linearGradient id="dark" x1="322" y1="181" x2="318" y2="198" gradientUnits="userSpaceOnUse">
          <stop offset="0" stopColor="#666" /><stop offset="1" stopColor="#222" />
        </linearGradient>
        <linearGradient id="collar" x1="0" y1="0" x2="1" y2="0">
          <stop offset="0" stopColor="#505050" /><stop offset="0.700" stopColor="#747474" /><stop offset="1" stopColor="#5e5e5e" />
        </linearGradient>
        <linearGradient id="trapUp" x1="745" y1="275" x2="790" y2="252" gradientUnits="userSpaceOnUse">
          <stop offset="0" stopColor="#3f3f3f" /><stop offset="0.550" stopColor="#777" /><stop offset="1" stopColor="#6a6a6a" />
        </linearGradient>
        <linearGradient id="trapLow" x1="757" y1="330" x2="857" y2="365" gradientUnits="userSpaceOnUse">
          <stop offset="0" stopColor="#606060" /><stop offset="0.300" stopColor="#606060" /><stop offset="0.550" stopColor="#363636" /><stop offset="0.850" stopColor="#4c4c4c" /><stop offset="1" stopColor="#3c3c3c" />
        </linearGradient>
        <radialGradient id="shine"><stop offset="0" stopColor="#b8b8b8" stopOpacity="0.700" /><stop offset="1" stopColor="#888" stopOpacity="0" /></radialGradient>
      </defs>

      <path d="M236 118H472.500V147L236 303Z" fill="url(#wall)" />
      <path d="M300 187L327 181 343 184 338 202 299 192Z" fill="url(#dark)" />
      <path d="M268.500 117V184L308.500 192V117Z" fill="#2e2e2e" />
      <path d="M308.500 117V192L354.500 162V117Z" fill="#858585" />
      <ellipse cx="341" cy="193" rx="4.500" ry="9.500" fill="#767676" transform="rotate(8 341 193)" />

      <path d="M326 205L372 215 366 232 323 222C319 219 320 207 326 205Z" fill="url(#stub)" />
      <path d="M363 213C370 212 380 215 388 216 384 222 382 232 383 238 374 237 366 234 360 231 358 226 360 217 363 213Z" fill="url(#collar)" />
      <path d="M367 213C363 219 363 227 365 233M371 213C367 219 366 228 368 234M377 215C373 221 372 230 375 236M381 215C377 221 376 231 379 237" />
      <path d="M388 217L546 252.500C542 258 540 266 541 272L383 237C382 230 383 222 388 217Z" fill="url(#run1)" />

      <path d="M563 256C576 260 584 270 584 286L564 286C563 279 559 276 552 275Z" fill="#747474" />
      <ellipse cx="573" cy="270" rx="9" ry="9" fill="url(#shine)" stroke="none" />
      <path d="M546 252.500L564 256C558 261 555 269 556 276L541 272.500C540 265 542 258 546 252.500Z" fill="url(#collar)" />
      <path d="M550 253C545 260 544 267 546 274M554 254C549 261 548 268 550 275M558 255C553 261 552 268 553 275" />
      <path d="M564.500 300V427C571 430 579 430 584.500 427V300Z" fill="url(#run2)" />
      <path d="M564 285C570 289 580 289 585 285V300C579 303 570 303 564 300Z" fill="url(#collar)" />
      <path d="M563 291C570 294 580 294 586 291M563 294C570 297 580 297 586 294" />

      <path d="M565 437C565 454 576 465 592 467L594 446C588 445 585 442 584 437Z" fill="#5a5a5a" />
      <ellipse cx="580" cy="446" rx="9" ry="8" fill="url(#shine)" stroke="none" />
      <path d="M564 424C570 428 580 428 585.500 424V438C579 441 570 441 564 438Z" fill="url(#collar)" />
      <path d="M563 429C570 433 580 433 586 429M563 432C570 436 580 436 586 432" />
      <path d="M589 446C594 444 599 447 603 448 599 454 597 461 598 468 592 468 587 465 585 461 584 456 586 450 589 446Z" fill="url(#collar)" />
      <path d="M594 446C590 452 589 459 591 466M597 446C593 452 592 460 594 467" />
      <path d="M603 448L949 525.500C945 531 943 538 944 545L598 468C597 461 599 453 603 448Z" fill="url(#run3)" />
      <ellipse cx="947" cy="535" rx="5" ry="10" fill="#b8442a" transform="rotate(8 947 535)" />
      <path d="M946 535.500h1.500" />

      <path d="M734 232C740 231 750 235 754 238L743 284C736 283 727 283 722 280 715 268 717 238 734 232Z" fill="#454545" />
      <path d="M741 240C748 238 757 239 764 244 784 252 800 286 797 310L755 310C755 296 752 290 742 283 731 270 733 246 741 240Z" fill="url(#trapUp)" stroke="none" />
      <path d="M752 238C778 245 800 280 797.500 303M743 283C750 286 755 295 755 303M754 238C734 232 724 272 739 284M752 240C738 239 730 270 742 283" />
      <ellipse cx="772" cy="264" rx="12" ry="22" fill="url(#shine)" stroke="none" transform="rotate(-35 772 264)" />
      <path d="M755.500 320C757 356 783 379 812 379 840 379 857 357 858 332L811 332C803 329 799 325 799 316Z" fill="url(#trapLow)" />
      <ellipse cx="793" cy="338" rx="16" ry="17" fill="url(#shine)" stroke="none" />
      <path d="M751 301C762 316 790 317 802 301V319C788 331 764 330 751 319Z" fill="#484848" />
      <path d="M751 301L755 298C761 314 792 315 798 298L802 301C790 318 761 317 751 301Z" fill="#777" />
      <path d="M810.500 318V335C824 344 848 344 861.500 332V318Z" fill="#424242" />
      <ellipse cx="836" cy="317.500" rx="25.500" ry="10" fill="#707070" />
      <path d="M835 317.500h1.500" />

      <g stroke="none">
        <path fillRule="evenodd" d="M945 222a44.500 21 0 1 0 89 0a44.500 21 0 1 0 -89 0zM954 220a35.500 14 0 1 0 71 0a35.500 14 0 1 0 -71 0z" fill="#4c4c4c" />
        <path d="M966 188L984 178 1012 183 997 196Z" fill="#777" />
        <path d="M966 188L997 196V227L967 217Z" fill="#676767" />
        <path d="M997 196L1012 183V210L997 227Z" fill="#5e5e5e" />
        <path d="M966 188L997 196 1012 183M997 196V227" stroke="#808080" />
        <g fill="#484848" fontSize="8">
          <text x="972" y="209" transform="rotate(8 972 209)">BACK</text>
          <text x="996" y="183" fontSize="6" transform="rotate(188 996 183)">TOP</text>
          <text x="1000" y="214" fontSize="6" transform="rotate(-40 1000 214)">LEFT</text>
        </g>
        <g fill="#a0a0a0" fontSize="13" fontWeight="600" fontStyle="italic">
          <text x="960" y="241" transform="rotate(12 960 241)">N</text>
          <text x="1020" y="230" transform="rotate(20 1020 230)">W</text>
          <text x="953" y="212" fontSize="9" transform="rotate(-15 953 212)">E</text>
        </g>
      </g>

      <circle cx="536.500" cy="308" r="24" stroke="#e3ea35" strokeWidth="2" />
      <path d="M536.500 307V319L539.200 316.500 541.500 321 543.500 320 541.300 315.800H545Z" fill="#fff" stroke="#222" strokeWidth="0.500" />
    </svg>
  );
}

function RibbonPanels() {
  return (
    <Ribbon>
      <Panel $w={13}>
        <PanelBody><SelectTool>fy</SelectTool></PanelBody>
        <Tool aria-label="Select options"><Svg w={7} h={14}><path d="M1 6h5L3.500 9z" fill="#333" stroke="none" /></Svg></Tool>
      </Panel>
      <Panel $w={45}>
        <PanelBody>
          <BigGrid>
            <Tool $dim aria-label="Type properties"><TypeProps /></Tool>
            <PressedTool aria-label="Properties"><PropsSheet /></PressedTool>
          </BigGrid>
        </PanelBody>
        <PanelLabel>Properties</PanelLabel>
      </Panel>
      <Panel $w={56}>
        <PanelBody $gap={1}>
          <PasteTool><Paste />Paste<Caret c="#999" /></PasteTool>
          <SmallGrid>
            <Tool $dim aria-label="Cut to clipboard"><Scissors /></Tool>
            <Tool $dim aria-label="Copy to clipboard"><Copy2 /></Tool>
            <Tool aria-label="Match type"><MatchType /></Tool>
          </SmallGrid>
        </PanelBody>
        <PanelLabel>Clipboard</PanelLabel>
      </Panel>
      <Panel $w={97}>
        <PanelBody>
          <SmallGrid $col={47}>
            <Tool $start><Cope />Cope<Caret /></Tool>
            <Tool $start><CutGeo />Cut<Caret /></Tool>
            <Tool $start><JoinGeo />Join<Caret /></Tool>
          </SmallGrid>
          <SmallGrid>
            <Tool $dim aria-label="Roof join"><Notch /></Tool>
            <Tool aria-label="Beam joins"><WallJoin /></Tool>
            <Tool aria-label="Paint"><PaintEdit /></Tool>
            <Tool aria-label="Split face"><SplitFace /></Tool>
            <Tool aria-label="Unjoin"><Unjoin /></Tool>
            <Tool aria-label="Demolish"><Hammer /></Tool>
          </SmallGrid>
          <SmallGrid $col={8}><span /><Tool aria-label="Unjoin options"><Caret /></Tool></SmallGrid>
        </PanelBody>
        <PanelLabel>Geometry</PanelLabel>
      </Panel>
      <Panel $w={166}>
        <PanelBody $gap={2}>
          <BigGrid>
            <Tool aria-label="Align"><Align /></Tool><Tool aria-label="Move"><Move /></Tool>
            <Tool aria-label="Offset"><Offset /></Tool><Tool aria-label="Copy"><CopyTool /></Tool>
            <Tool aria-label="Mirror pick axis"><MirrorPick /></Tool><Tool aria-label="Rotate"><Rotate /></Tool>
            <Tool aria-label="Mirror draw axis"><MirrorDraw /></Tool><Tool aria-label="Trim"><Trim /></Tool>
          </BigGrid>
          <SmallGrid>
            <Tool aria-label="Split"><Split /></Tool><Tool aria-label="Array"><ArrayTool /></Tool><Tool aria-label="Trim single"><TrimOne /></Tool>
            <Tool aria-label="Split with gap"><SplitGap /></Tool><Tool aria-label="Scale"><Scale /></Tool><Tool aria-label="Trim multiple"><TrimMany /></Tool>
            <Tool aria-label="Unpin"><Pin x /></Tool><Tool aria-label="Pin"><Pin /></Tool><Tool aria-label="Delete"><Delete /></Tool>
          </SmallGrid>
        </PanelBody>
        <PanelLabel>Modify</PanelLabel>
      </Panel>
      <Panel $w={45}>
        <PanelBody $gap={3}>
          <SmallGrid $col={22}>
            <Tool $start $dim aria-label="Hide in view"><Bulb /><Caret /></Tool>
            <Tool $start $dim aria-label="Override graphics"><Brush /><Caret /></Tool>
            <Tool $start $dim aria-label="Selection box"><Box3 /></Tool>
          </SmallGrid>
          <SmallGrid>
            <Tool $dim aria-label="Displace elements"><Blocks /></Tool>
            <Tool aria-label="Linework"><LineWork /></Tool>
          </SmallGrid>
        </PanelBody>
        <PanelLabel>View</PanelLabel>
      </Panel>
      <Panel $w={40}>
        <PanelBody $gap={1}>
          <BigGrid>
            <Tool $dim aria-label="Measure"><MeasureTool /></Tool>
            <Tool aria-label="Dimension"><DimTool /></Tool>
          </BigGrid>
          <CaretColumn><Caret /><Caret /></CaretColumn>
        </PanelBody>
        <PanelLabel>Measure</PanelLabel>
      </Panel>
      <Panel $w={57}>
        <PanelBody>
          <BigGrid>
            <Tool aria-label="Create assembly"><Assembly /></Tool><Tool aria-label="Create parts"><Parts /></Tool>
            <Tool aria-label="Create group"><GroupTool /></Tool><Tool $dim aria-label="Create similar"><Similar /></Tool>
          </BigGrid>
        </PanelBody>
        <PanelLabel>Create</PanelLabel>
      </Panel>
    </Ribbon>
  );
}

function App() {
  return (
    <>
      <GlobalStyle />
      <Page>
        <TitleBar>
          <QuickAccess>{quickItems.map((item, i) => <QuickItem key={i} item={item} />)}</QuickAccess>
          <AppTitle>{"Autodesk Revit 2018 -     Project2 - 3D View: {3D}"}</AppTitle>
          <AccountBar>
            <Slot $w={10} $dim aria-label="Collapse search"><Caret c="#111" /></Slot>
            <Search aria-label="Search" placeholder="Type a keyword or phrase" />
            <Slot $w={17} aria-label="Find"><Binoculars /></Slot>
            <Slot $w={16} aria-label="Communication center"><Dish /></Slot>
            <Slot $w={17} aria-label="Favorites"><Star /></Slot>
            <Slot $w={18} aria-label="Account"><Person /></Slot>
            <UserName>gregorio.paler...</UserName>
            <Slot $w={15} aria-label="App store"><Cart /></Slot>
            <Divider />
            <Slot $w={19} aria-label="Help"><Help /></Slot>
            <Slot $w={14} $dim aria-label="Help options"><Caret c="#111" /></Slot>
            <Slot $w={23} aria-label="Minimize"><Svg s={8}><path d="M1 6.500h5" stroke="#fff" strokeWidth="1.500" /></Svg></Slot>
          </AccountBar>
        </TitleBar>

        <Tabs>
          <FileTab aria-label="File" />
          {tabNames.map((name) => <Tab key={name} $active={name === "Modify"}>{name}</Tab>)}
          <TabMenu aria-label="Ribbon display">
            <Svg w={10} h={7}><rect x="0.500" y="1" width="9" height="5" rx="1" fill="#fff" stroke="none" /><path d="M3.500 4.500h3L5 2.500z" fill="#333" stroke="none" /></Svg>
            <Caret c="#ddd" />
          </TabMenu>
        </Tabs>

        <RibbonPanels />
        <OptionsBar />

        <Workspace>
          <Browser>
            <DockTitle>
              Browser - Project2
              <button aria-label="Close browser"><Svg s={7}><path d="M1 1l5 5M6 1L1 6" stroke="#222" /></Svg></button>
            </DockTitle>
            <TreeArea>
              <TreeClip>
                <Tree>{treeItems.map((item, i) => <TreeItem key={i} item={item} />)}</Tree>
              </TreeClip>
              <VScroll $w={12}>
                <ScrollButton aria-label="Scroll up"><Chevron d="up" /></ScrollButton>
                <Track><Thumb $grow="333" /><Space $grow="205" /></Track>
                <ScrollButton aria-label="Scroll down"><Chevron /></ScrollButton>
              </VScroll>
            </TreeArea>
            <HScroll>
              <Track $horizontal><Thumb $horizontal $grow="204" /><Space $grow="4" /></Track>
              <ScrollButton aria-label="Scroll right"><Chevron d="right" c="#222" /></ScrollButton>
              <ScrollButton as="span" />
            </HScroll>
          </Browser>

          <ViewWindow>
            <ViewRow>
              <Canvas>
                <Scene />
                <WindowButtons>
                  <button aria-label="Minimize view"><Svg s={9}><path d="M0 7h8" stroke="#fff" strokeWidth="2" /></Svg></button>
                  <button aria-label="Restore view"><Svg s={9}><path d="M3 1h5v5H3z" fill="#fff" stroke="#fff" /><path d="M1 3.500h5v5H1z" fill="#000" stroke="#fff" /></Svg></button>
                  <button aria-label="Close view"><Svg s={9}><path d="M1 1.500l6 6M7 1.500l-6 6" stroke="#fff" strokeWidth="2" /></Svg></button>
                </WindowButtons>
                <NavBar>
                  <button aria-label="Close navigation bar"><Svg s={5}><circle cx="2.500" cy="2.500" r="2" fill="#777" stroke="#999" /></Svg></button>
                  <button aria-label="Steering wheel"><Svg s={16}><circle cx="8" cy="8" r="7" fill="#a8adb0" stroke="#777" /><rect x="4.500" y="4.500" width="7" height="7" rx="2.500" fill="#b9bdc0" stroke="#555" /></Svg></button>
                  <button aria-label="Zoom"><Svg s={12}><path d="M1 2h7v6H1z" fill="#5b9a4c" stroke="none" /><circle cx="8" cy="8" r="2" fill="#aaa" stroke="none" /><path d="M9 9l3 3" stroke="#777" /></Svg></button>
                  <button aria-label="Navigation options"><Svg s={5}><circle cx="2.500" cy="2.500" r="2" fill="#777" stroke="#999" /></Svg></button>
                </NavBar>
              </Canvas>
              <VScroll $w={13}>
                <ScrollButton aria-label="Scroll view up"><Chevron d="up" /></ScrollButton>
                <Track><Space $grow="272" /><Thumb /><Space $grow="274" /></Track>
                <ScrollButton aria-label="Scroll view down"><Chevron c="#222" /></ScrollButton>
              </VScroll>
            </ViewRow>
            <ControlBar>
              <ScaleButton>1 : 100</ScaleButton>
              <ControlIcons>
                {viewControls.map(([label, icon]) => <button key={label} aria-label={label}>{icon}</button>)}
              </ControlIcons>
              <Track $horizontal><Space $grow="260" /><Thumb $horizontal /><Space $grow="262" /></Track>
              <ScrollButton aria-label="Scroll view right"><Chevron d="right" c="#222" /></ScrollButton>
              <ScrollButton as="span"><Svg s={8}><path d="M6.500 1v6M4.500 3v4M2.500 5v2" stroke="#aaa" strokeDasharray="1 1" /></Svg></ScrollButton>
            </ControlBar>
          </ViewWindow>

          <Properties>
            <PropertiesInner>
              <DockTitle>Properties</DockTitle>
              <TypeCard>
                <TypeThumb><House3D s={22} /></TypeThumb>
                3D View
              </TypeCard>
              <TypeRow>
                <SelectBox $w={183} $h={16}>
                  <select aria-label="View type"><option>{"3D View: {3D}"}</option></select>
                  <Chevron />
                </SelectBox>
                <EditType>
                  <Svg s={12}><path d="M2 1.500h4v3H2zM7 1.500h4v3H7zM1 6.500h4v4H1z" stroke="#777" fill="#eee" /><path d="M6.500 4.500h5v7h-5z" fill="#cfe4f5" stroke="#345" /><path d="M8 6.500h2M8 8.500h2" stroke="#345" /></Svg>
                  Edit Type
                </EditType>
              </TypeRow>
              <PropertyGrid />
              <GridRest />
              <HelpRow>
                <a href="#help">Properties help</a>
                <ApplyButton>Apply</ApplyButton>
              </HelpRow>
            </PropertiesInner>
          </Properties>
        </Workspace>

        <StatusBar>
          <StatusText>o select, TAB for alternates, CTRL adds, SHIFT unselects.</StatusText>
          <StatusGroup>
            <Workset />
            <SelectBox $w={143} $h={12} $light>
              <select aria-label="Active workset"><option> </option></select>
              <Chevron c="#888" />
            </SelectBox>
            <Bubble /><Count $after={10}>:0</Count>
            <ListIc /><OptIc />
            <SelectBox $w={143} $h={12} $light>
              <select aria-label="Design option"><option>Main Model</option></select>
              <Chevron c="#888" />
            </SelectBox>
          </StatusGroup>
          <StatusRight>
            <LinkSel /><UnderSel /><PinSel /><FaceSel /><DragSel /><GearSel /><Filter /><Count>:0</Count>
          </StatusRight>
        </StatusBar>

        <Watermark>
          <MarkTop>ORDED WITH</MarkTop>
          <MarkLine>
            REENCAST
            <Svg s={24}><circle cx="12" cy="12" r="9.500" stroke="#3f6f94" strokeWidth="3" fill="#e2e6e8" fillOpacity="0.500" /><circle cx="12" cy="12" r="4.500" fill="#3d8fc6" stroke="none" /></Svg>
            MATIC
          </MarkLine>
        </Watermark>
      </Page>
    </>
  );
}

export default App;
